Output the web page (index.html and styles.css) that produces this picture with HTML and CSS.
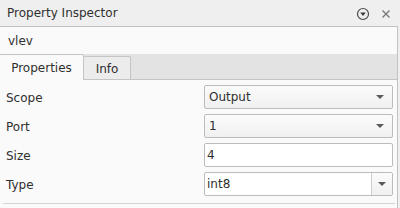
FILE: index.html
```html
<!DOCTYPE html>
<html>
<head>
<meta charset="utf-8">
<link rel="stylesheet" href="styles.css">
</head>
<body>
<div class="window">
  <div class="titlebar">
    <span class="title">Property Inspector</span>
    <span class="title-icons">
      <svg class="icon" width="14" height="14" viewBox="0 0 14 14">
        <circle cx="7" cy="7" r="5.5" fill="none" stroke="#4a4a4a" stroke-width="1.2"/>
        <path d="M4.2 5.6 L9.8 5.6 L7 9 Z" fill="#3a3a3a"/>
      </svg>
      <svg class="icon close" width="12" height="12" viewBox="0 0 12 12">
        <path d="M2.5 2.5 L9.5 9.5 M9.5 2.5 L2.5 9.5" stroke="#7a7a7a" stroke-width="1.4"/>
      </svg>
    </span>
  </div>
  <div class="namefield">vlev</div>
  <div class="tabbar">
    <div class="tab active">Properties</div>
    <div class="tab">Info</div>
  </div>
  <div class="panel">
    <div class="grid">
      <div class="label">Scope</div>
      <div class="combo"><span>Output</span><span class="arrow"></span></div>
      <div class="label">Port</div>
      <div class="combo"><span>1</span><span class="arrow"></span></div>
      <div class="label">Size</div>
      <div class="lineedit">4</div>
      <div class="label">Type</div>
      <div class="editcombo"><span class="edit">int8</span><span class="btn"><span class="arrow"></span></span></div>
    </div>
    <div class="sep"></div>
  </div>
</div>
</body>
</html>
```
FILE: styles.css
```css
html, body {
  margin: 0;
  padding: 0;
}
body {
  width: 400px;
  height: 208px;
  overflow: hidden;
  background: #efefef;
  font-family: "DejaVu Sans", sans-serif;
  font-size: 12px;
  color: #2f2f2f;
}
.window {
  width: 398px;
}
.titlebar {
  height: 26px;
  display: flex;
  align-items: center;
  justify-content: space-between;
  background: #efefef;
}
.title {
  padding-left: 7px;
  padding-top: 0px;
}
.title-icons {
  display: flex;
  align-items: center;
  gap: 10px;
  padding-right: 6px;
  padding-top: 1px;
}
.icon {
  display: block;
}
.namefield {
  height: 27px;
  box-sizing: border-box;
  border: 1px solid #c2c2c2;
  border-left: none;
  background: #fafafa;
  padding-left: 8px;
  display: flex;
  align-items: center;
  height: 29px;
}
.tabbar {
  height: 26px;
  box-sizing: border-box;
  background: #e3e3e3;
  border-bottom: 1px solid #c4c4c4;
  border-right: 1px solid #c2c2c2;
  display: flex;
  align-items: flex-end;
  margin-top: -1px;
}
.tab {
  box-sizing: border-box;
  height: 23px;
  width: 47px;
  background: #ececec;
  border: 1px solid #c4c4c4;
  border-bottom: none;
  border-left: none;
  display: flex;
  align-items: center;
  justify-content: center;
  padding-top: 1px;
  border-radius: 2px 2px 0 0;
}
.tab.active {
  width: 84px;
  height: 26px;
  margin-bottom: -1px;
  background: #fafafa;
  border-radius: 0 2px 0 0;
  padding-top: 0;
}
.panel {
  background: #fafafa;
  border-right: 1px solid #c2c2c2;
  padding: 5px 4px 0 6px;
  height: 128px;
  box-sizing: border-box;
}
.grid {
  display: grid;
  grid-template-columns: 1fr 189px;
  row-gap: 5px;
  align-items: center;
}
.label {
  padding-top: 1px;
}
.combo, .lineedit, .editcombo {
  box-sizing: border-box;
  height: 24px;
  border: 1px solid #bcbcbc;
  border-radius: 2px;
  display: flex;
  align-items: center;
}
.combo {
  background: linear-gradient(#fbfbfb, #f0f0f0);
  justify-content: space-between;
  padding: 0 8px 0 4px;
}
.arrow {
  width: 0;
  height: 0;
  border-left: 4px solid transparent;
  border-right: 4px solid transparent;
  border-top: 4px solid #5a5a5a;
}
.lineedit {
  background: #ffffff;
  padding-left: 2px;
}
.editcombo {
  background: #ffffff;
}
.edit {
  flex: 1;
  padding-left: 2px;
}
.btn {
  width: 20px;
  height: 100%;
  border-left: 1px solid #cfcfcf;
  background: linear-gradient(#fbfbfb, #f0f0f0);
  display: flex;
  align-items: center;
  justify-content: center;
}
.sep {
  margin: 7px -2px 0 -3px;
  height: 1px;
  background: #d4d4d4;
}
```
